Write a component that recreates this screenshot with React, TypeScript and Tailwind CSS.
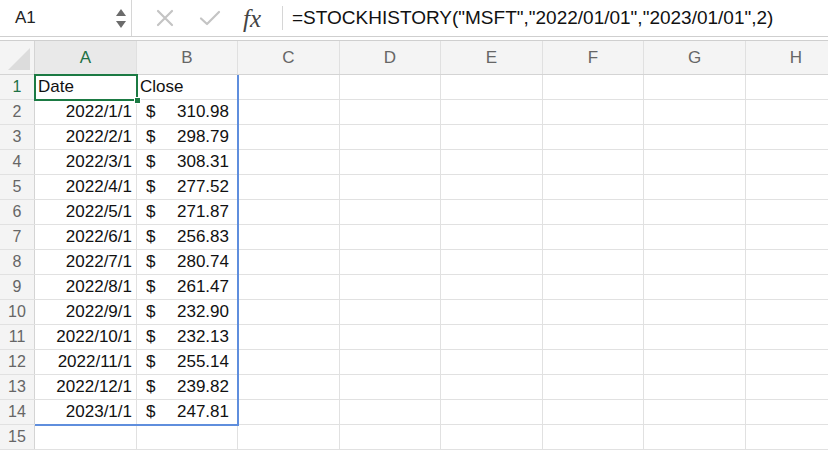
import React from "react";

const cols = [
  { name: "A", w: 102 },
  { name: "B", w: 101 },
  { name: "C", w: 102 },
  { name: "D", w: 101 },
  { name: "E", w: 102 },
  { name: "F", w: 101 },
  { name: "G", w: 102 },
  { name: "H", w: 101 },
];

const data = [
  ["2022/1/1", "310.98"],
  ["2022/2/1", "298.79"],
  ["2022/3/1", "308.31"],
  ["2022/4/1", "277.52"],
  ["2022/5/1", "271.87"],
  ["2022/6/1", "256.83"],
  ["2022/7/1", "280.74"],
  ["2022/8/1", "261.47"],
  ["2022/9/1", "232.90"],
  ["2022/10/1", "232.13"],
  ["2022/11/1", "255.14"],
  ["2022/12/1", "239.82"],
  ["2023/1/1", "247.81"],
];

function Cell({ w, children, className = "" }: { w: number; children?: React.ReactNode; className?: string }) {
  return (
    <div
      className={`h-full shrink-0 border-r border-[#e1e1e1] flex items-center ${className}`}
      style={{ width: w }}
    >
      {children}
    </div>
  );
}

export default function App() {
  const rows: { a: React.ReactNode; b: React.ReactNode }[] = [
    { a: <span className="pl-[3px]">Date</span>, b: <span className="pl-[3px]">Close</span> },
    ...data.map(([d, v]) => ({
      a: <span className="w-full text-right pr-[4px]">{d}</span>,
      b: (
        <div className="w-full flex justify-between pl-[9px] pr-[8px]">
          <span>$</span>
          <span>{v}</span>
        </div>
      ),
    })),
    { a: null, b: null },
  ];

  return (
    <div className="w-[828px] h-[458px] overflow-hidden bg-white font-['Liberation_Sans',Arial,sans-serif] text-[#111]">
      {/* formula bar */}
      <div className="h-[37px] flex items-center border-b border-[#cfcfcf]">
        <div className="w-[132px] h-full flex items-center justify-between border-r border-[#d6d6d6] pl-[15px] pr-[5px]">
          <span className="text-[17px] text-[#222]">A1</span>
          <div className="flex flex-col items-center gap-[5px]">
            <svg width="10" height="7" viewBox="0 0 10 7"><path d="M5 0 L10 7 L0 7 Z" fill="#6b6b6b" /></svg>
            <svg width="10" height="7" viewBox="0 0 10 7"><path d="M0 0 L10 0 L5 7 Z" fill="#6b6b6b" /></svg>
          </div>
        </div>
        <div className="w-[66px] flex justify-center">
          <svg width="18" height="18" viewBox="0 0 18 18"><path d="M2 2 L16 16 M16 2 L2 16" stroke="#c4c4c4" strokeWidth="2.2" strokeLinecap="round" /></svg>
        </div>
        <div className="w-[24px] flex justify-center">
          <svg width="22" height="16" viewBox="0 0 22 16"><path d="M2 8.5 L8 14 L20 2" stroke="#c4c4c4" strokeWidth="2.2" fill="none" strokeLinecap="round" strokeLinejoin="round" /></svg>
        </div>
        <div className="w-[60px] flex justify-center">
          <span className="italic font-['Liberation_Serif',serif] text-[25px] text-[#444] leading-none">fx</span>
        </div>
        <div className="h-[24px] border-l border-[#d6d6d6] pl-[9px] flex items-center text-[19px] text-[#111] whitespace-nowrap">
          =STOCKHISTORY("MSFT","2022/01/01","2023/01/01",2)
        </div>
      </div>
      <div className="h-[4px] border-b border-[#cfcfcf]" />

      {/* grid */}
      <div className="relative">
        {/* column headers */}
        <div className="h-[34px] flex bg-[#f4f4f4] border-b border-[#d4d4d4]">
          <div className="w-[35px] h-full shrink-0 border-r border-[#d4d4d4] relative">
            <svg className="absolute right-[4px] bottom-[4px]" width="22" height="22" viewBox="0 0 22 22"><path d="M22 0 L22 22 L0 22 Z" fill="#dcdcdc" /></svg>
          </div>
          {cols.map((c) => (
            <div
              key={c.name}
              className={`h-full shrink-0 border-r border-[#e0e0e0] flex items-center justify-center text-[17px] ${c.name === "A" ? "text-[#1e7145] bg-[#e9e9e9]" : "text-[#666]"}`}
              style={{ width: c.w }}
            >
              {c.name}
            </div>
          ))}
        </div>

        {rows.map((r, i) => (
          <div key={i} className="h-[25px] flex border-b border-[#e1e1e1] text-[17px]">
            <div
              className={`w-[35px] h-full shrink-0 border-r border-[#d4d4d4] bg-[#f4f4f4] flex items-center justify-center text-[16px] ${i === 0 ? "text-[#1e7145] bg-[#e9e9e9]" : "text-[#666]"}`}
            >
              {i + 1}
            </div>
            <Cell w={cols[0].w}>{r.a}</Cell>
            <Cell w={cols[1].w}>{r.b}</Cell>
            {cols.slice(2).map((c) => (
              <Cell key={c.name} w={c.w} />
            ))}
          </div>
        ))}

        {/* spill range */}
        <div className="absolute left-[35px] top-[34px] w-[204px] h-[351px] border-r-2 border-b-2 border-[#5f8edd] pointer-events-none" />
        {/* active cell */}
        <div className="absolute left-[34px] top-[33px] w-[104px] h-[27px] border-2 border-[#1b7a43] pointer-events-none">
          <div className="absolute -right-[5px] -bottom-[5px] w-[7px] h-[7px] bg-[#1b7a43] border border-white" />
        </div>
      </div>
    </div>
  );
}
